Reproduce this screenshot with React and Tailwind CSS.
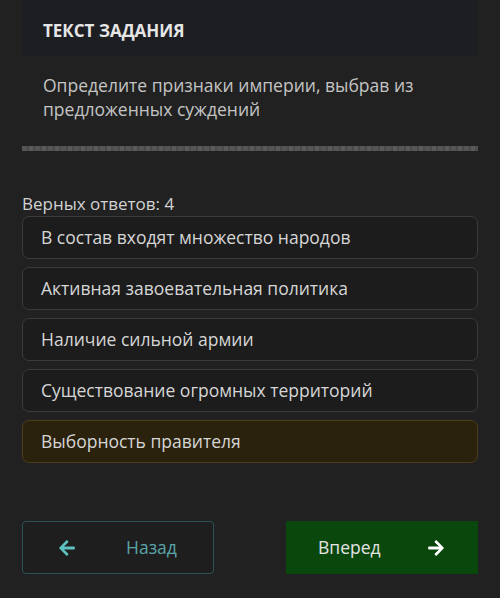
import React from "react";
import { FaArrowLeft, FaArrowRight } from "react-icons/fa";

const options = [
  "В состав входят множество народов",
  "Активная завоевательная политика",
  "Наличие сильной армии",
  "Существование огромных территорий",
];

function App() {
  return (
    <div
      className="w-[500px] h-[598px] bg-[#212121] overflow-hidden"
      style={{ fontFamily: '"Open Sans", "Noto Sans", sans-serif' }}
    >
      {/* Task header */}
      <div className="mx-[22px] h-[56px] bg-[#1d1e22] px-[21px] pt-[19px]">
        <h1 className="text-[17px] font-bold uppercase text-[#e6e6e6] leading-[23px]">
          Текст задания
        </h1>
      </div>

      <p className="px-[43px] pt-[17px] text-[17.5px] leading-[24px] text-[#c4c4c4]">
        Определите признаки империи, выбрав из предложенных суждений
      </p>

      {/* Obscured line */}
      <div className="mx-[22px] mt-[25px] h-[5px] bg-[repeating-linear-gradient(90deg,#555_0px,#555_5px,#4a4a4a_5px,#4a4a4a_7px,#5a5a5a_7px,#5a5a5a_11px,#4b4b4b_11px,#4b4b4b_13px)]" />

      {/* Answers */}
      <div className="px-[22px] pt-[43px]">
        <div className="text-[17px] leading-[20px] text-[#d2d2d2]">Верных ответов: 4</div>
        <div className="flex flex-col gap-[8px] pt-[2px]">
          {options.map((o) => (
            <div
              key={o}
              className="h-[43px] flex items-center rounded-[7px] border-[1.5px] border-[#3b3b3b] bg-[#1c1c1c] px-[18px] text-[17.5px] text-[#d6d6d6]"
            >
              {o}
            </div>
          ))}
          <div className="h-[43px] flex items-center rounded-[7px] border-[1.5px] border-[#4e3d1c] bg-[#2a220c] px-[18px] text-[17.5px] text-[#d6d6d6]">
            Выборность правителя
          </div>
        </div>
      </div>

      {/* Navigation */}
      <div className="flex justify-between px-[22px] pt-[58px]">
        <button className="w-[192px] h-[53px] flex items-center rounded-[4px] border-[1.5px] border-[#2a5355] bg-[#1e1e1e] text-[#5aa5a8]">
          <FaArrowLeft className="ml-[35px] w-[18px] h-[18px] text-[#5ec0c0]" />
          <span className="ml-[50px] text-[17.5px]">Назад</span>
        </button>
        <button className="w-[192px] h-[53px] flex items-center bg-[#0a470c] text-[#e4e4e4]">
          <span className="ml-[32px] text-[17.5px]">Вперед</span>
          <FaArrowRight className="ml-[46px] w-[18px] h-[18px] text-white" />
        </button>
      </div>
    </div>
  );
}

export default App;
